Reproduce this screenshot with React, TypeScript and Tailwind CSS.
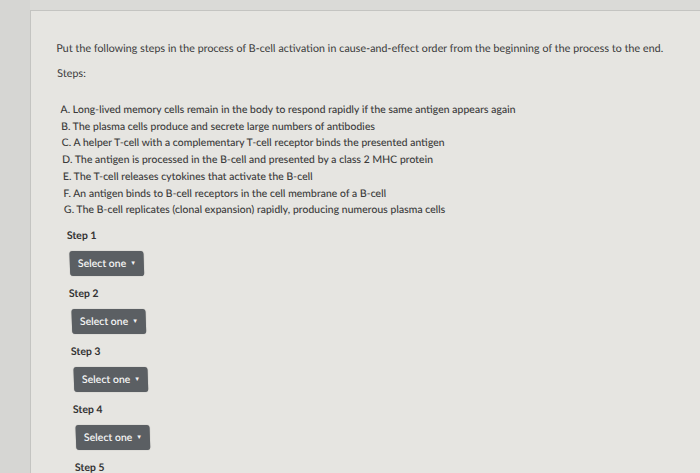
const items = [
  "A. Long-lived memory cells remain in the body to respond rapidly if the same antigen appears again",
  "B. The plasma cells produce and secrete large numbers of antibodies",
  "C. A helper T-cell with a complementary T-cell receptor binds the presented antigen",
  "D. The antigen is processed in the B-cell and presented by a class 2 MHC protein",
  "E. The T-cell releases cytokines that activate the B-cell",
  "F. An antigen binds to B-cell receptors in the cell membrane of a B-cell",
  "G. The B-cell replicates (clonal expansion) rapidly, producing numerous plasma cells",
];

function SelectButton() {
  return (
    <button className="flex items-center gap-[4px] h-[25px] px-[8px] rounded-[3px] bg-[#5b5f63] text-[#f4f4f4] text-[10.5px] font-semibold shadow-[0_0_1px_rgba(0,0,0,0.4)]">
      Select one
      <span className="text-[6px] leading-none">▼</span>
    </button>
  );
}

function App() {
  return (
    <div
      className="w-[700px] h-[473px] overflow-hidden flex bg-[#d9d9d6] text-[#3b3b3b]"
      style={{ fontFamily: "Lato, 'Noto Sans', sans-serif" }}
    >
      <div className="w-[30px] shrink-0 bg-[#d6d6d3]" />
      <div className="flex-1 flex flex-col">
        <div className="h-[10px] shrink-0 bg-[#dadad7]" />
        <div className="flex-1 border-l border-t border-[#c4c4c1] bg-[#e6e5e1]">
          <div className="pl-[24px] pt-[29px] origin-top-left skew-x-2">
            <p className="text-[10.8px] leading-[16px]">
              Put the following steps in the process of B-cell activation in cause-and-effect order from the beginning of the process to the end.
            </p>
            <p className="text-[10.8px] leading-[16px] mt-[9px]">Steps:</p>
            <ul className="mt-[20px] pl-[2px] flex flex-col">
              {items.map((t) => (
                <li key={t} className="text-[10.5px] leading-[16.7px] font-medium">
                  {t}
                </li>
              ))}
            </ul>
            <div className="pl-[4px] mt-[9px] flex flex-col">
              {[1, 2, 3, 4, 5].map((n) => (
                <div key={n} className="flex flex-col items-start">
                  <span className="text-[10.5px] leading-[16px] font-bold text-[#333]">Step {n}</span>
                  <div className="mt-[8px] mb-[9px] ml-[2px]">
                    <SelectButton />
                  </div>
                </div>
              ))}
            </div>
          </div>
        </div>
      </div>
    </div>
  );
}

export default App;
